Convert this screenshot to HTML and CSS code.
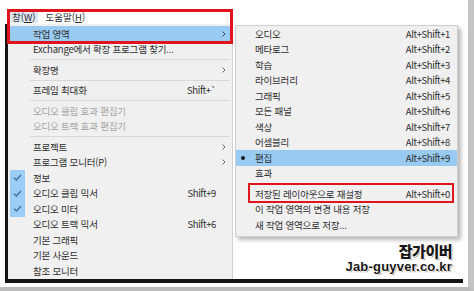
FILE: index.html
```html
<!DOCTYPE html>
<html lang="ko">
<head>
<meta charset="utf-8">
<link rel="stylesheet" href="styles.css">
</head>
<body>
<div class="page">
  <div class="shot">
    <div class="leftcol">
      <div class="menubar">
        <span class="mb-item active">창(<u>W</u>)</span>
        <span class="mb-item">도움말(<u>H</u>)</span>
      </div>
      <div class="menu">
        <div class="item hl"><span class="gut"></span><span class="label">작업 영역</span><span class="arr"><svg width="4" height="6" viewBox="0 0 4 6"><polyline points="0.5,0.5 3,3 0.5,5.5" fill="none" stroke="#444" stroke-width="1"/></svg></span></div>
        <div class="item"><span class="gut"></span><span class="label">Exchange에서 확장 프로그램 찾기...</span><span class="arr"></span></div>
        <div class="sep"></div>
        <div class="item"><span class="gut"></span><span class="label">확장명</span><span class="arr"><svg width="4" height="6" viewBox="0 0 4 6"><polyline points="0.5,0.5 3,3 0.5,5.5" fill="none" stroke="#666" stroke-width="1"/></svg></span></div>
        <div class="sep"></div>
        <div class="item"><span class="gut"></span><span class="label">프레임 최대화</span><span class="key">Shift+`</span><span class="arr"></span></div>
        <div class="sep"></div>
        <div class="item dis"><span class="gut"></span><span class="label">오디오 클립 효과 편집기</span><span class="arr"></span></div>
        <div class="item dis"><span class="gut"></span><span class="label">오디오 트랙 효과 편집기</span><span class="arr"></span></div>
        <div class="sep"></div>
        <div class="item"><span class="gut"></span><span class="label">프로젝트</span><span class="arr"><svg width="4" height="6" viewBox="0 0 4 6"><polyline points="0.5,0.5 3,3 0.5,5.5" fill="none" stroke="#666" stroke-width="1"/></svg></span></div>
        <div class="item"><span class="gut"></span><span class="label">프로그램 모니터(P)</span><span class="arr"><svg width="4" height="6" viewBox="0 0 4 6"><polyline points="0.5,0.5 3,3 0.5,5.5" fill="none" stroke="#666" stroke-width="1"/></svg></span></div>
        <div class="item"><span class="gut chk"><svg width="9" height="7" viewBox="0 0 9 7"><polyline points="1,3.6 3.4,6 8,1" fill="none" stroke="#3a6fa6" stroke-width="1.3"/></svg></span><span class="label">정보</span><span class="arr"></span></div>
        <div class="item"><span class="gut chk"><svg width="9" height="7" viewBox="0 0 9 7"><polyline points="1,3.6 3.4,6 8,1" fill="none" stroke="#3a6fa6" stroke-width="1.3"/></svg></span><span class="label">오디오 클립 믹서</span><span class="key">Shift+9</span><span class="arr"></span></div>
        <div class="item"><span class="gut chk"><svg width="9" height="7" viewBox="0 0 9 7"><polyline points="1,3.6 3.4,6 8,1" fill="none" stroke="#3a6fa6" stroke-width="1.3"/></svg></span><span class="label">오디오 미터</span><span class="arr"></span></div>
        <div class="item"><span class="gut"></span><span class="label">오디오 트랙 믹서</span><span class="key">Shift+6</span><span class="arr"></span></div>
        <div class="item"><span class="gut"></span><span class="label">기본 그래픽</span><span class="arr"></span></div>
        <div class="item"><span class="gut"></span><span class="label">기본 사운드</span><span class="arr"></span></div>
        <div class="item"><span class="gut"></span><span class="label">참조 모니터</span><span class="arr"></span></div>
      </div>
      <div class="redbox box1"></div>
    </div>
    <div class="rightcol">
      <div class="submenu">
        <div class="sitem"><span class="sgut"></span><span class="label">오디오</span><span class="key">Alt+Shift+1</span></div>
        <div class="sitem"><span class="sgut"></span><span class="label">메타로그</span><span class="key">Alt+Shift+2</span></div>
        <div class="sitem"><span class="sgut"></span><span class="label">학습</span><span class="key">Alt+Shift+3</span></div>
        <div class="sitem"><span class="sgut"></span><span class="label">라이브러리</span><span class="key">Alt+Shift+4</span></div>
        <div class="sitem"><span class="sgut"></span><span class="label">그래픽</span><span class="key">Alt+Shift+5</span></div>
        <div class="sitem"><span class="sgut"></span><span class="label">모든 패널</span><span class="key">Alt+Shift+6</span></div>
        <div class="sitem"><span class="sgut"></span><span class="label">색상</span><span class="key">Alt+Shift+7</span></div>
        <div class="sitem"><span class="sgut"></span><span class="label">어셈블리</span><span class="key">Alt+Shift+8</span></div>
        <div class="sitem hl"><span class="sgut"><span class="dot"></span></span><span class="label">편집</span><span class="key">Alt+Shift+9</span></div>
        <div class="sitem"><span class="sgut"></span><span class="label">효과</span></div>
        <div class="ssep"></div>
        <div class="sitem"><span class="sgut"></span><span class="label">저장된 레이아웃으로 재설정</span><span class="key">Alt+Shift+0</span></div>
        <div class="sitem"><span class="sgut"></span><span class="label">이 작업 영역의 변경 내용 저장</span></div>
        <div class="sitem"><span class="sgut"></span><span class="label">새 작업 영역으로 저장...</span></div>
        <div class="redbox box2"></div>
      </div>
      <div class="wm">
        <div class="wm1">잡가이버</div>
        <div class="wm2">Jab-guyver.co.kr</div>
      </div>
    </div>
  </div>
</div>
</body>
</html>
```
FILE: styles.css
```css
html, body {
  margin: 0;
  padding: 0;
  background: #fff;
}
.page {
  width: 474px;
  height: 291px;
  box-sizing: border-box;
  border-right: 6px solid #c4c4c4;
  border-bottom: 4px solid #bcbcbc;
  padding-left: 5px;
  background: #fff;
  overflow: hidden;
  font-family: "Noto Sans CJK KR", "Noto Sans", sans-serif;
  font-size: 9.5px;
  color: #2e2e2e;
}
.shot {
  display: flex;
  width: 458px;
  height: 283px;
  box-sizing: border-box;
  border-bottom: 4px solid #151515;
}
.leftcol {
  width: 228px;
  display: flex;
  flex-direction: column;
  position: relative;
}
.menubar {
  height: 24px;
  box-sizing: border-box;
  padding: 12px 0 0 5px;
  display: flex;
  gap: 6px;
}
.mb-item {
  height: 11px;
  line-height: 11px;
  padding: 0 2px;
}
.mb-item.active {
  background: #dde9f5;
}
.menu {
  flex: 1;
  background: #f0f0f0;
  border-left: 3px solid #151515;
  border-right: 1px solid #d2d2d2;
  padding: 2px 2px 0 2px;
}
.item, .sitem {
  display: flex;
  align-items: center;
  height: 15.5px;
  white-space: nowrap;
}
.item.hl, .sitem.hl {
  background: #99cbf2;
}
.item.dis {
  color: #a3a3a3;
}
.gut {
  width: 15px;
  height: 100%;
  flex: none;
  display: flex;
  align-items: center;
  justify-content: center;
}
.gut.chk {
  background: #9ccdf5;
}
.label {
  flex: 1;
  margin-left: 8px;
  letter-spacing: -0.2px;
}
.key {
  flex: none;
  letter-spacing: -0.4px;
}
.arr {
  width: 12px;
  flex: none;
  display: flex;
  justify-content: center;
  align-items: center;
  padding-left: 2px;
}
.sep {
  height: 5px;
  display: flex;
  align-items: center;
  padding-left: 20px;
}
.sep::after {
  content: "";
  flex: 1;
  height: 1px;
  background: #d8d8d8;
}
.redbox {
  position: absolute;
  box-sizing: border-box;
  border: 3px solid #e0141c;
  pointer-events: none;
}
.box1 {
  left: 2px;
  top: 9px;
  width: 226px;
  height: 35px;
}
.rightcol {
  flex: 1;
  display: flex;
  flex-direction: column;
  padding: 25px 0 0 2px;
}
.submenu {
  position: relative;
  width: 223px;
  box-sizing: border-box;
  background: #f0f0f0;
  border: 1px solid #cfcfcf;
  box-shadow: 3px 3px 4px rgba(0, 0, 0, 0.28);
  padding: 0 0 3px 0;
}
.sgut {
  width: 18px;
  height: 100%;
  flex: none;
  display: flex;
  align-items: center;
  justify-content: center;
}
.dot {
  width: 4px;
  height: 4px;
  border-radius: 50%;
  background: #1c1c1c;
  margin-right: 4px;
}
.sitem .label {
  margin-left: 1px;
}
.sitem .key {
  padding-right: 7px;
}
.ssep {
  height: 5px;
  display: flex;
  align-items: center;
  padding: 0 4px 0 14px;
}
.ssep::after {
  content: "";
  flex: 1;
  height: 1px;
  background: #d8d8d8;
}
.box2 {
  left: 12px;
  top: 157px;
  width: 206px;
  height: 20px;
  border-width: 2px;
}
.wm {
  margin-top: 4px;
  padding-right: 11px;
  text-align: right;
  font-weight: 900;
  color: #161616;
  text-shadow: -1px 0 #fff, 1px 0 #fff, 0 -1px #fff, 0 1px #fff, 1px 1px 1px #555;
}
.wm1 {
  font-size: 15px;
  line-height: 19px;
  letter-spacing: -0.5px;
}
.wm2 {
  font-family: "Liberation Sans", Arial, sans-serif;
  font-weight: 700;
  font-size: 13px;
  line-height: 14px;
  letter-spacing: 0.2px;
}
```
